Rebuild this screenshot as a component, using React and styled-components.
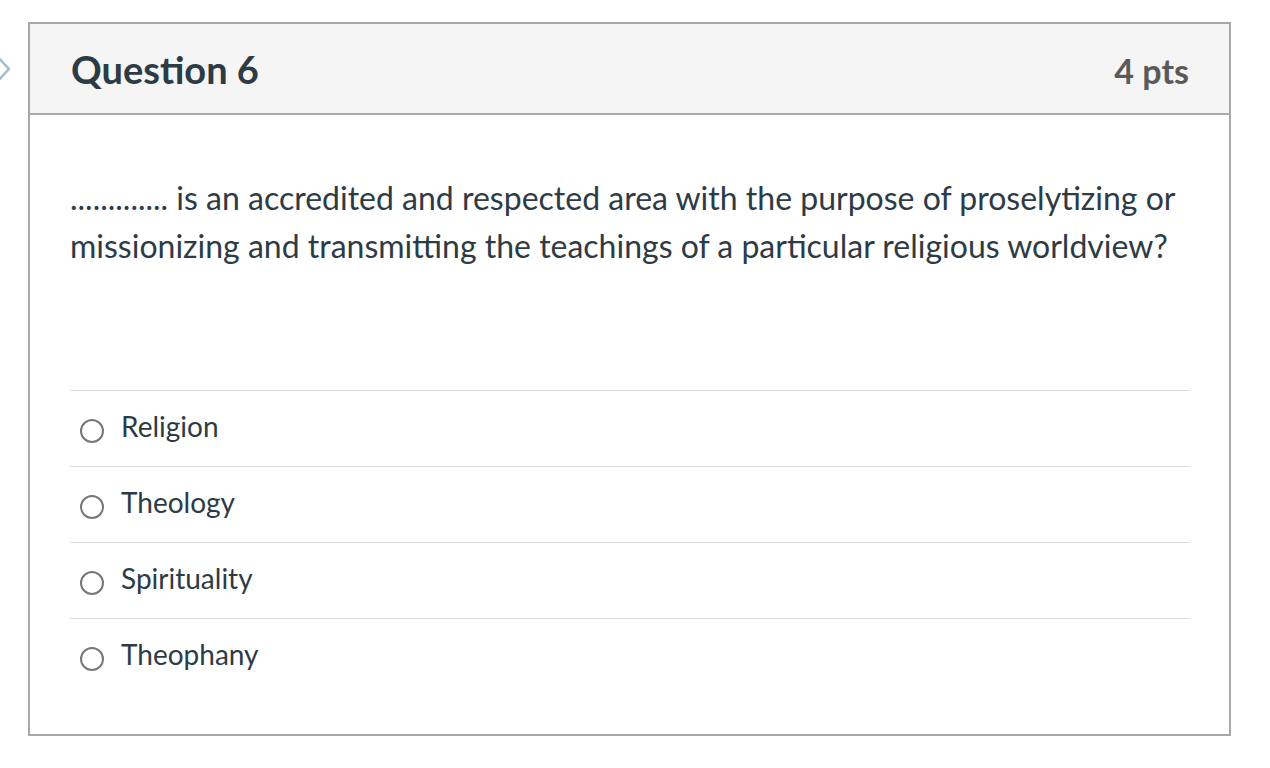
import styled, { createGlobalStyle } from "styled-components";

const GlobalStyle = createGlobalStyle`
  body {
    margin: 0;
    background: #ffffff;
    font-family: Lato, "Noto Sans", sans-serif;
  }
`;

const answers = ["Religion", "Theology", "Spirituality", "Theophany"];

const App = () => {
  return (
    <>
      <GlobalStyle />
      <Page>
        <FlagArea>
          <svg width="14" height="34" viewBox="0 0 14 34">
            <polyline
              points="-4,3 9,17 -4,31"
              fill="none"
              stroke="#a9bccb"
              strokeWidth="2.5"
              strokeLinejoin="round"
            />
          </svg>
        </FlagArea>
        <Card>
          <Header>
            <Title>Question 6</Title>
            <Points>4 pts</Points>
          </Header>
          <Body>
            <QuestionText>
              ............. is an accredited and respected area with the
              purpose of proselytizing or missionizing and transmitting the
              teachings of a particular religious worldview?
            </QuestionText>
            <AnswerList>
              {answers.map((answer) => (
                <AnswerRow key={answer}>
                  <Radio />
                  <AnswerLabel>{answer}</AnswerLabel>
                </AnswerRow>
              ))}
            </AnswerList>
          </Body>
        </Card>
      </Page>
    </>
  );
};

export default App;

const Page = styled.div`
  display: flex;
  align-items: flex-start;
  padding-top: 22px;
`;

const FlagArea = styled.div`
  width: 28px;
  margin-top: 30px;
  display: flex;
`;

const Card = styled.div`
  width: 1203px;
  box-sizing: border-box;
  border: 2px solid #a8a8a8;
  background: #ffffff;
`;

const Header = styled.div`
  height: 91px;
  box-sizing: border-box;
  display: flex;
  align-items: center;
  justify-content: space-between;
  padding: 0 40px 0 41px;
  background: #f5f5f5;
  border-bottom: 2px solid #a8a8a8;
`;

const Title = styled.h2`
  margin: 0;
  font-size: 38px;
  font-weight: 700;
  color: #2d3b45;
`;

const Points = styled.div`
  margin-top: 4px;
  font-size: 34px;
  font-weight: 700;
  color: #5a5a5a;
`;

const Body = styled.div`
  padding: 0 39px 40px 40px;
`;

const QuestionText = styled.p`
  margin: 59px 0 120px;
  font-size: 32px;
  line-height: 48px;
  color: #2d3b45;
`;

const AnswerList = styled.div`
  display: flex;
  flex-direction: column;
`;

const AnswerRow = styled.label`
  height: 76px;
  box-sizing: border-box;
  display: flex;
  align-items: center;
  gap: 17px;
  padding-left: 10px;
  border-top: 1px solid #dcdcdc;
`;

const Radio = styled.span`
  width: 24px;
  height: 24px;
  flex-shrink: 0;
  box-sizing: border-box;
  border-radius: 50%;
  border: 2px solid #777777;
  margin-top: 4px;
`;

const AnswerLabel = styled.span`
  font-size: 28px;
  color: #2d3b45;
  margin-bottom: 5px;
`;
